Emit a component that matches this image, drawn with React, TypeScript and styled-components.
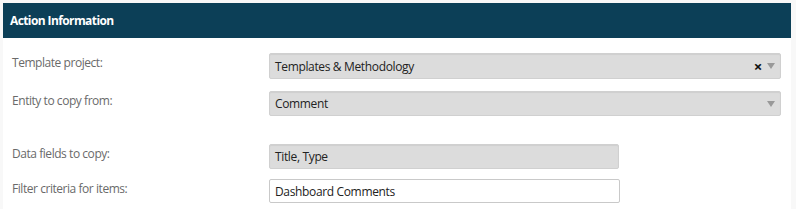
import styled, { createGlobalStyle } from "styled-components";

const GlobalStyle = createGlobalStyle`
  html, body {
    margin: 0;
    padding: 0;
    background: #f8f8f8;
    font-family: "Open Sans", "Liberation Sans", sans-serif;
  }
`;

const Panel = styled.section`
  margin: 3px 5px 0 3px;
  background: #ffffff;
  height: 206px;
`;

const Header = styled.div`
  height: 35px;
  background: #0c3f57;
  color: #ffffff;
  font-size: 12px;
  font-weight: 700;
  letter-spacing: -0.6px;
  display: flex;
  align-items: center;
  padding-left: 7px;
`;

const Body = styled.div`
  padding: 15px 10px 0 9px;
  display: grid;
  grid-template-columns: 257px 1fr;
  row-gap: 12px;
`;

const Label = styled.div<{ $offset?: number }>`
  font-size: 12px;
  color: #6a6a6a;
  line-height: 16px;
  padding-top: 2px;
  letter-spacing: -0.45px;
  margin-top: ${(p) => p.$offset ?? 0}px;
`;

const Field = styled.div<{ $width?: number; $disabled?: boolean; $offset?: number; $h?: number }>`
  box-sizing: border-box;
  width: ${(p) => (p.$width ? `${p.$width}px` : "100%")};
  height: ${(p) => p.$h ?? 25}px;
  margin-top: ${(p) => p.$offset ?? 0}px;
  background: ${(p) => (p.$disabled ? "#dcdcdc" : "#ffffff")};
  border: 1px solid ${(p) => (p.$disabled ? "#d0d0d0" : "#c9c9c9")};
  border-radius: 2px;
  box-shadow: ${(p) => (p.$disabled ? "inset 0 1px 1px rgba(0,0,0,0.06)" : "none")};
  display: flex;
  align-items: center;
  padding: 0 5px 0 5px;
  font-size: 12px;
  color: #222222;
  letter-spacing: -0.35px;
`;

const Value = styled.span`
  flex: 1;
`;

const Clear = styled.span`
  font-size: 15px;
  font-weight: 700;
  color: #111111;
  margin-right: 5px;
  line-height: 1;
`;

const Arrow = styled.span`
  width: 0;
  height: 0;
  border-left: 4px solid transparent;
  border-right: 4px solid transparent;
  border-top: 6px solid #999999;
`;

export default function App() {
  return (
    <>
      <GlobalStyle />
      <Panel>
        <Header>Action Information</Header>
        <Body>
          <Label>Template project:</Label>
          <Field $disabled $h={26}>
            <Value>Templates &amp; Methodology</Value>
            <Clear>×</Clear>
            <Arrow />
          </Field>

          <Label>Entity to copy from:</Label>
          <Field $disabled>
            <Value>Comment</Value>
            <Arrow />
          </Field>

          <Label $offset={16}>Data fields to copy:</Label>
          <Field $disabled $offset={16} $width={350}>
            <Value>Title, Type</Value>
          </Field>

          <Label $offset={-2}>Filter criteria for items:</Label>
          <Field $width={351} $h={24} $offset={-2}>
            <Value>Dashboard Comments</Value>
          </Field>
        </Body>
      </Panel>
    </>
  );
}
